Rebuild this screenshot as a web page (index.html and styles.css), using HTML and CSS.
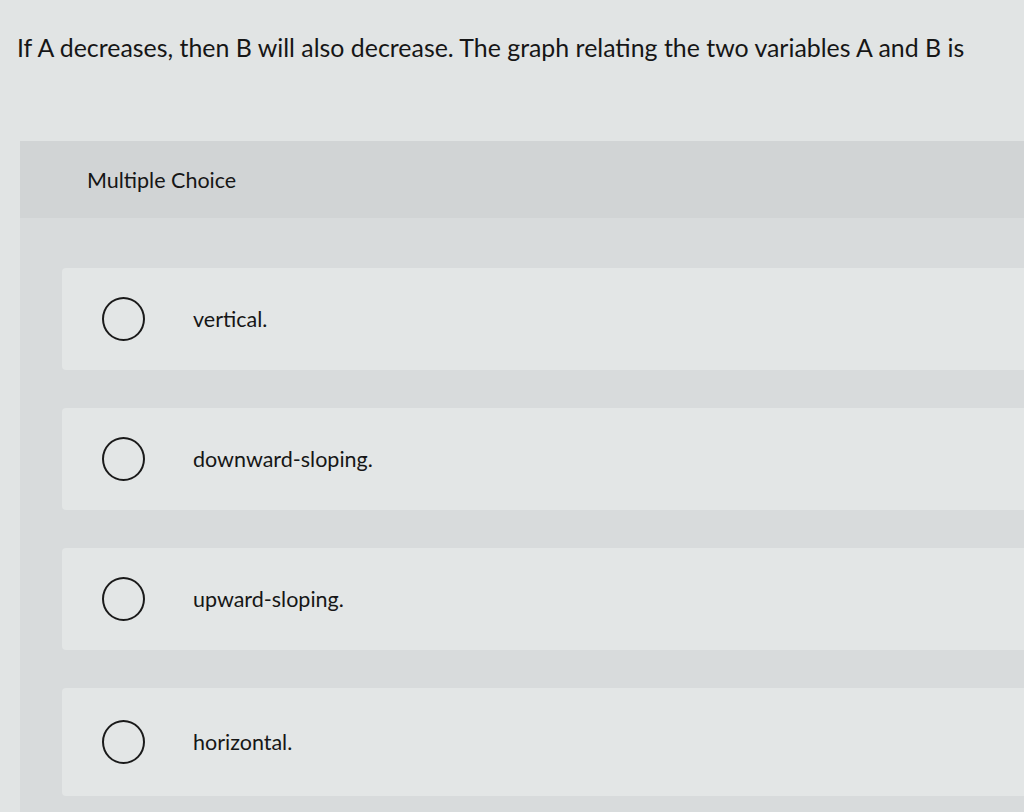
FILE: index.html
```html
<!DOCTYPE html>
<html lang="en">
<head>
<meta charset="utf-8">
<title>Multiple Choice</title>
<link rel="stylesheet" href="styles.css">
</head>
<body>
<div class="page">
  <p class="question">If A decreases, then B will also decrease. The graph relating the two variables A and B is</p>
  <section class="panel">
    <header class="panel-head">Multiple Choice</header>
    <div class="options">
      <label class="option"><span class="radio"></span><span class="label">vertical.</span></label>
      <label class="option"><span class="radio"></span><span class="label">downward-sloping.</span></label>
      <label class="option"><span class="radio"></span><span class="label">upward-sloping.</span></label>
      <label class="option"><span class="radio"></span><span class="label">horizontal.</span></label>
    </div>
  </section>
</div>
</body>
</html>
```
FILE: styles.css
```css
html, body {
  margin: 0;
  padding: 0;
  background: #e1e4e4;
  height: 100%;
  overflow: hidden;
}
.page {
  font-family: Lato, "Open Sans", "Liberation Sans", sans-serif;
  color: #161616;
  height: 812px;
  display: flex;
  flex-direction: column;
}
.question {
  margin: 0;
  padding: 32px 0 0 17px;
  height: 141px;
  box-sizing: border-box;
  font-size: 24.9px;
  line-height: 30px;
  white-space: nowrap;
}
.panel {
  margin-left: 20px;
  flex: 1;
  background: #d8dbdc;
  display: flex;
  flex-direction: column;
}
.panel-head {
  height: 77px;
  padding-left: 67px;
  display: flex;
  align-items: center;
  background: #d1d4d5;
  font-size: 21.5px;
}
.options {
  padding: 50px 0 0 42px;
  display: flex;
  flex-direction: column;
  gap: 38px;
}
.option {
  height: 102px;
  background: #e3e6e6;
  border-radius: 4px 0 0 4px;
  display: flex;
  align-items: center;
  padding-left: 40px;
}
.option:last-child {
  height: 108px;
}
.radio {
  width: 39px;
  height: 40px;
  border: 2px solid #1a1a1a;
  border-radius: 50%;
  flex: none;
}
.label {
  margin-left: 48px;
  font-size: 21.5px;
}
```
